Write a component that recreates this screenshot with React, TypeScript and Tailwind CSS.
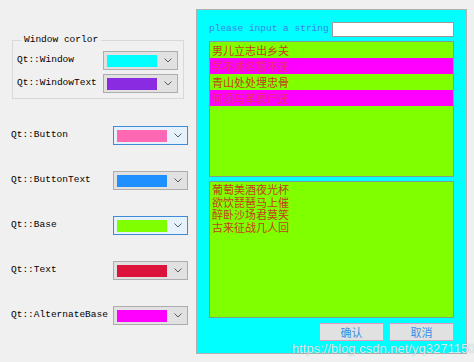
import React from 'react';

const mono = "font-['Liberation_Mono','DejaVu_Sans_Mono',monospace]";
const cjk = "font-['Noto_Sans_CJK_SC','Noto_Sans',sans-serif]";

const Chevron: React.FC = () => (
  <svg width="8" height="5" viewBox="0 0 8 5" className="ml-auto mr-[5px]">
    <path d="M0.5 0.5 L4 4 L7.5 0.5" fill="none" stroke="#5a5a5a" strokeWidth="1" />
  </svg>
);

const Combo: React.FC<{ swatch: string; focus?: boolean }> = ({ swatch, focus }) => (
  <div
    className={`flex items-center w-[75px] h-[19px] border pl-[3px] shrink-0 ${
      focus ? 'border-[#3f8bd6] bg-[#e5f1fb]' : 'border-[#adadad] bg-[#e1e1e1]'
    }`}
  >
    <div className={`w-[50px] h-[12px] ${swatch}`} />
    <Chevron />
  </div>
);

const rows = [
  { label: 'Qt::Button', swatch: 'bg-[#ff69b4]', focus: true },
  { label: 'Qt::ButtonText', swatch: 'bg-[#1e90ff]', focus: false },
  { label: 'Qt::Base', swatch: 'bg-[#7fff00]', focus: true },
  { label: 'Qt::Text', swatch: 'bg-[#dc143c]', focus: false },
  { label: 'Qt::AlternateBase', swatch: 'bg-[#ff00ff]', focus: false },
];

const items = ['男儿立志出乡关', '学不成名誓不还', '青山处处埋忠骨', '何须马革裹尸还'];
const poem = ['葡萄美酒夜光杯', '欲饮琵琶马上催', '醉卧沙场君莫笑', '古来征战几人回'];

export default function App() {
  return (
    <div className="relative w-[474px] h-[362px] overflow-hidden bg-[#f0f0f0] flex text-black">
      {/* left: palette pickers */}
      <div className={`w-[196px] shrink-0 pt-[34px] ${mono} text-[9.5px]`}>
        <fieldset className="ml-[12px] w-[172px] border border-[#d8d8d8] pl-[4px] pb-[5px]">
          <legend className="ml-[4px] px-[3px] leading-[12px]">Window corlor</legend>
          <div className="flex flex-col gap-[4px] pt-[5px]">
            <div className="flex items-center h-[19px]">
              <span className="w-[86px]">Qt::Window</span>
              <Combo swatch="bg-[#00ffff]" />
            </div>
            <div className="flex items-center h-[19px]">
              <span className="w-[86px]">Qt::WindowText</span>
              <Combo swatch="bg-[#8a2be2]" />
            </div>
          </div>
        </fieldset>

        <div className="mt-[27px] pl-[11px] flex flex-col gap-[26px]">
          {rows.map(r => (
            <div key={r.label} className="flex items-center h-[19px]">
              <span className="w-[102px]">{r.label}</span>
              <Combo swatch={r.swatch} focus={r.focus} />
            </div>
          ))}
        </div>
      </div>

      {/* right: preview window */}
      <div className="mt-[9px] w-[271px] h-[345px] shrink-0 border border-[#b0b0b0] bg-[#00ffff] px-[12px] pt-[12px] pb-[12px] flex flex-col">
        <div className="flex items-center h-[15px]">
          <span className={`${mono} text-[9.5px] text-[#3a86e6] flex-1 whitespace-nowrap`}>please input a string</span>
          <div className="w-[122px] h-[15px] bg-white border border-[#9a9a9a]" />
        </div>

        <div className={`mt-[4px] h-[136px] border border-[#7f9f8f] bg-[#7fff00] ${cjk} text-[11px] text-[#c4401a]`}>
          {items.map((t, i) => (
            <div
              key={t}
              className={`h-[16px] leading-[16px] pl-[2px] ${i % 2 === 1 ? 'bg-[#ff00ff] text-[#e8306e]' : ''}`}
            >
              {t}
            </div>
          ))}
        </div>

        <div className={`mt-[4px] h-[137px] border border-[#7f9f8f] bg-[#7fff00] pl-[2px] pt-[1px] ${cjk} text-[11px] leading-[12.5px] text-[#c4401a]`}>
          {poem.map(l => (
            <div key={l}>{l}</div>
          ))}
        </div>

        <div className={`mt-[5px] flex justify-end gap-[5px] ${cjk} text-[11px]`}>
          <button className="w-[65px] h-[18px] bg-[#e1e1e1] border border-[#e49ac0] text-[#3a8fe6]">确认</button>
          <button className="w-[65px] h-[18px] bg-[#e1e1e1] border border-[#e49ac0] text-[#3a8fe6]">取消</button>
        </div>
      </div>

      {/* watermark */}
      <div className="absolute left-[292px] top-[339px] whitespace-nowrap font-['Liberation_Sans',Arial,sans-serif] text-[13px] text-[#eef4f8]/90 [text-shadow:0_0_1px_rgba(80,110,130,0.5)]">
        https://blog.csdn.net/yq327115059
      </div>
    </div>
  );
}
